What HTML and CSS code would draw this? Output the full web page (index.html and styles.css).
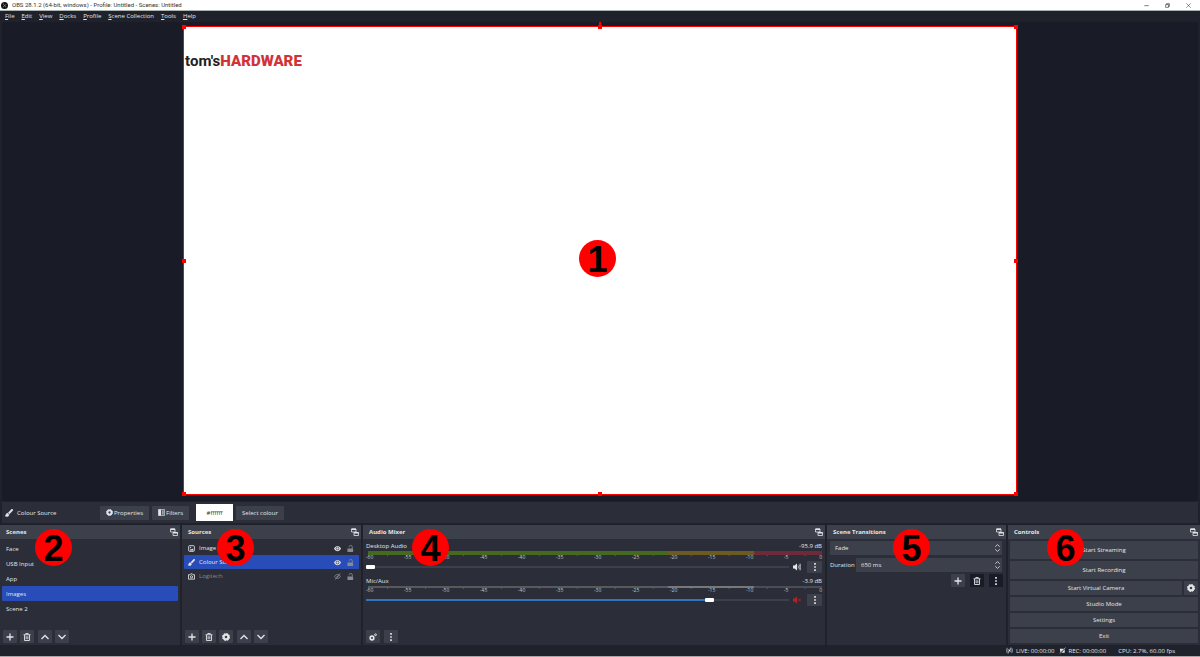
FILE: index.html
```
<!DOCTYPE html>
<html lang="en">
  <head>
    <meta charset="utf-8">
    <title>OBS 28.1.2 (64-bit, windows) - Profile: Untitled - Scenes: Untitled</title>
    <link rel="stylesheet" href="styles.css">
  </head>
  <body>
    <svg class="symbols" aria-hidden="true">
      <symbol id="plus" viewBox="0 0 16 16"><path d="M8 1v14M1 8h14" fill="none" stroke="currentColor" stroke-width="2.6"/></symbol>
      <symbol id="trash" viewBox="0 0 16 16"><path d="M1 3.5h14M5.5 3V1h5v2M3 4v11h10V4M6.3 6.5v6M9.7 6.5v6" fill="none" stroke="currentColor" stroke-width="1.8"/></symbol>
      <symbol id="up" viewBox="0 0 16 16"><path d="M1 12l7-7 7 7" fill="none" stroke="currentColor" stroke-width="2.6"/></symbol>
      <symbol id="down" viewBox="0 0 16 16"><path d="M1 4l7 7 7-7" fill="none" stroke="currentColor" stroke-width="2.6"/></symbol>
      <symbol id="gear" viewBox="0 0 16 16"><circle cx="8" cy="8" r="4.8" fill="none" stroke="currentColor" stroke-width="4.4"/><circle cx="8" cy="8" r="6.8" fill="none" stroke="currentColor" stroke-width="2.2" stroke-dasharray="3 2.34"/></symbol>
      <symbol id="gears" viewBox="0 0 16 16"><circle cx="6" cy="10" r="3.7" fill="none" stroke="currentColor" stroke-width="3.2"/><circle cx="13" cy="3.5" r="1.8" fill="none" stroke="currentColor" stroke-width="2"/></symbol>
      <symbol id="dots" viewBox="0 0 16 16"><path d="M6.3 0h3.4v3.4H6.3zM6.3 6.3h3.4v3.4H6.3zM6.3 12.6h3.4V16H6.3z" fill="currentColor"/></symbol>
      <symbol id="brush" viewBox="0 0 16 16"><path d="M15.5.5c-.8-.8-2-.4-3 .6L6.600 7.600l2.200 2.200 6.200-6.300c1-1 1.200-2.300.5-3zM5.500 8.600C3 8.300 2.200 10 2 11.700 1.800 12.900 1 13.500.2 13.600 2 15.800 7.800 16 8 11.300z" fill="currentColor" stroke="currentColor"/></symbol>
      <symbol id="image" viewBox="0 0 16 16"><rect x="1.500" y="1.500" width="13" height="13" rx="2" fill="none" stroke="currentColor" stroke-width="2"/><path d="M3.500 12.500l3-4 2 2 2-2.500 2.500 4.500z" fill="currentColor"/><circle cx="6" cy="5.500" r="1.300" fill="currentColor"/></symbol>
      <symbol id="camera" viewBox="0 0 16 16"><path d="M1 4h3.500L6 2h4l1.500 2H15v10H1z" fill="none" stroke="currentColor" stroke-width="2"/><circle cx="8" cy="8.800" r="2.600" fill="none" stroke="currentColor" stroke-width="2"/></symbol>
      <symbol id="eye" viewBox="0 0 16 16"><path d="M0 8c4-8 12-8 16 0-4 8-12 8-16 0z" fill="currentColor"/><circle cx="8" cy="8" r="3.200" fill="none" stroke="#2b2e38" stroke-width="1.600"/></symbol>
      <symbol id="eye-off" viewBox="0 0 16 16"><path d="M1 8c4-6 10-6 14 0-4 6-10 6-14 0zM14 1L3 15" fill="none" stroke="currentColor" stroke-width="2"/><circle cx="8" cy="8" r="2" fill="currentColor"/></symbol>
      <symbol id="lock" viewBox="0 0 16 16"><path d="M1 8h13v8H1z" fill="currentColor"/><path d="M5 5V4c0-4 7-4 7 0v4" fill="none" stroke="currentColor" stroke-width="2"/></symbol>
      <symbol id="float" viewBox="0 0 16 16"><path d="M1 2h9v6H1zM6 9h9v6H6z" fill="none" stroke="currentColor" stroke-width="1.600"/><path d="M1 1h9v3H1zM6 8h9v3H6z" fill="currentColor"/></symbol>
      <symbol id="filters" viewBox="0 0 16 16"><path d="M1 1h14v14H1z" fill="none" stroke="currentColor" stroke-width="1.500"/><path d="M1 1h6v14H1zM9 3h1.500v10H9zM12 3h1v10h-1z" fill="currentColor"/></symbol>
      <symbol id="speaker" viewBox="0 0 16 16"><path d="M0 5h3l5-4v14l-5-4H0z" fill="currentColor"/><path d="M10 5q2 3 0 6M12 3q4 5 0 10M14 1q4 7 0 14" fill="none" stroke="currentColor" stroke-width="1.300"/></symbol>
      <symbol id="muted" viewBox="0 0 16 16"><path d="M0 5h3l5-4v14l-5-4H0z" fill="currentColor"/><path d="M10.500 5.500l5 5M15.500 5.500l-5 5" fill="none" stroke="currentColor" stroke-width="2"/></symbol>
      <symbol id="live" viewBox="0 0 16 16"><path d="M3 2q-4 6 0 12M5.500 4.500q-2 3.500 0 7M13 2q4 6 0 12M10.500 4.500q2 3.500 0 7M11 1L5 15" fill="none" stroke="currentColor" stroke-width="1.400"/><circle cx="8" cy="8" r="1.600" fill="currentColor"/></symbol>
      <symbol id="rec" viewBox="0 0 16 16"><path d="M2 4h9L3 12zM13 5v8H6z" fill="currentColor"/><path d="M15 1L2 15" stroke="currentColor" stroke-width="1.400"/></symbol>
      <symbol id="obs" viewBox="0 0 16 16"><circle cx="8" cy="8" r="8" fill="#111"/><path d="M5 3q0 4 3 5 3-1 4-3M8 8q-1 4-4 3M8 8q3 1 3 4" fill="none" stroke="#aaa" stroke-width="1.300"/></symbol>
      <symbol id="minimize" viewBox="0 0 16 16"><path d="M1 8.500h14" stroke="currentColor" stroke-width="2"/></symbol>
      <symbol id="restore" viewBox="0 0 16 16"><path d="M2 5h9v9H2zM5 5V2h9v9h-3" fill="none" stroke="currentColor" stroke-width="2"/></symbol>
      <symbol id="close" viewBox="0 0 16 16"><path d="M1 1l14 14M15 1L1 15" stroke="currentColor" stroke-width="1.700"/></symbol>
    </svg>

    <header class="titlebar">
      <svg class="icon"><use href="#obs"/></svg>
      <span class="title">OBS 28.1.2 (64-bit, windows) - Profile: Untitled - Scenes: Untitled</span>
      <button aria-label="Minimize"><svg class="icon"><use href="#minimize"/></svg></button>
      <button aria-label="Restore"><svg class="icon"><use href="#restore"/></svg></button>
      <button aria-label="Close"><svg class="icon"><use href="#close"/></svg></button>
    </header>

    <nav class="menubar">
      <a href="#"><u>F</u>ile</a>
      <a href="#"><u>E</u>dit</a>
      <a href="#"><u>V</u>iew</a>
      <a href="#"><u>D</u>ocks</a>
      <a href="#"><u>P</u>rofile</a>
      <a href="#"><u>S</u>cene Collection</a>
      <a href="#"><u>T</u>ools</a>
      <a href="#"><u>H</u>elp</a>
    </nav>

    <main class="preview">
      <div class="canvas">
        <div class="logo"><span>tom's</span><b>HARDWARE</b></div>
        <i class="handle top left"></i>
        <i class="handle top middle"></i>
        <i class="handle rotate"></i>
        <i class="handle top right"></i>
        <i class="handle center left"></i>
        <i class="handle center right"></i>
        <i class="handle bottom left"></i>
        <i class="handle bottom middle"></i>
        <i class="handle bottom right"></i>
        <span class="marker">1</span>
      </div>
    </main>

    <section class="context">
      <svg class="icon"><use href="#brush"/></svg>
      <span class="source-name">Colour Source</span>
      <button><svg class="icon"><use href="#gear"/></svg>Properties</button>
      <button><svg class="icon"><use href="#filters"/></svg>Filters</button>
      <input class="swatch" type="text" value="#ffffff" aria-label="Colour" readonly>
      <button>Select colour</button>
    </section>

    <div class="docks">
      <section class="dock">
        <h2>Scenes <svg class="icon"><use href="#float"/></svg></h2>
        <ul class="scenes">
          <li>Face</li>
          <li>USB Input</li>
          <li>App</li>
          <li class="selected">Images</li>
          <li>Scene 2</li>
        </ul>
        <div class="tools">
          <button aria-label="Add scene"><svg class="icon"><use href="#plus"/></svg></button>
          <button aria-label="Remove scene"><svg class="icon"><use href="#trash"/></svg></button>
          <button class="apart" aria-label="Move scene up"><svg class="icon"><use href="#up"/></svg></button>
          <button aria-label="Move scene down"><svg class="icon"><use href="#down"/></svg></button>
        </div>
        <span class="marker">2</span>
      </section>

      <section class="dock">
        <h2>Sources <svg class="icon"><use href="#float"/></svg></h2>
        <ul class="sources">
          <li><svg class="icon"><use href="#image"/></svg><span>Image</span><svg class="icon"><use href="#eye"/></svg><svg class="icon lock"><use href="#lock"/></svg></li>
          <li class="selected"><svg class="icon"><use href="#brush"/></svg><span>Colour Source</span><svg class="icon"><use href="#eye"/></svg><svg class="icon lock"><use href="#lock"/></svg></li>
          <li class="hidden"><svg class="icon"><use href="#camera"/></svg><span>Logitech</span><svg class="icon off"><use href="#eye-off"/></svg><svg class="icon lock"><use href="#lock"/></svg></li>
        </ul>
        <div class="tools">
          <button aria-label="Add source"><svg class="icon"><use href="#plus"/></svg></button>
          <button aria-label="Remove source"><svg class="icon"><use href="#trash"/></svg></button>
          <button aria-label="Source properties"><svg class="icon"><use href="#gear"/></svg></button>
          <button class="apart" aria-label="Move source up"><svg class="icon"><use href="#up"/></svg></button>
          <button aria-label="Move source down"><svg class="icon"><use href="#down"/></svg></button>
        </div>
        <span class="marker">3</span>
      </section>

      <section class="dock mixer">
        <h2>Audio Mixer <svg class="icon"><use href="#float"/></svg></h2>
        <div class="channel">
          <div class="row"><label for="desktop">Desktop Audio</label><output>-95.9 dB</output></div>
          <div class="meter"></div>
          <div class="scale"><span>-60</span><span>-55</span><span>-50</span><span>-45</span><span>-40</span><span>-35</span><span>-30</span><span>-25</span><span>-20</span><span>-15</span><span>-10</span><span>-5</span><span>0</span></div>
          <div class="row volume">
            <input id="desktop" type="range" min="0" max="100" value="0">
            <button class="mute" aria-label="Mute Desktop Audio"><svg class="icon"><use href="#speaker"/></svg></button>
            <button aria-label="Desktop Audio options"><svg class="icon"><use href="#dots"/></svg></button>
          </div>
        </div>
        <div class="channel quiet">
          <div class="row"><label for="mic">Mic/Aux</label><output>-3.9 dB</output></div>
          <div class="meter"></div>
          <div class="scale"><span>-60</span><span>-55</span><span>-50</span><span>-45</span><span>-40</span><span>-35</span><span>-30</span><span>-25</span><span>-20</span><span>-15</span><span>-10</span><span>-5</span><span>0</span></div>
          <div class="row volume">
            <input id="mic" class="filled" type="range" min="0" max="100" value="82">
            <button class="mute muted" aria-label="Unmute Mic/Aux"><svg class="icon"><use href="#muted"/></svg></button>
            <button aria-label="Mic/Aux options"><svg class="icon"><use href="#dots"/></svg></button>
          </div>
        </div>
        <div class="tools">
          <button aria-label="Advanced audio properties"><svg class="icon"><use href="#gears"/></svg></button>
          <button class="apart" aria-label="Mixer menu"><svg class="icon"><use href="#dots"/></svg></button>
        </div>
        <span class="marker">4</span>
      </section>

      <section class="dock transitions">
        <h2>Scene Transitions <svg class="icon"><use href="#float"/></svg></h2>
        <div class="field">
          <select aria-label="Transition"><option>Fade</option></select>
          <span class="arrows"><svg class="icon"><use href="#up"/></svg><svg class="icon"><use href="#down"/></svg></span>
        </div>
        <div class="field duration">
          <label for="duration">Duration</label>
          <input id="duration" type="text" value="650 ms">
          <span class="arrows"><svg class="icon"><use href="#up"/></svg><svg class="icon"><use href="#down"/></svg></span>
        </div>
        <div class="tools">
          <button aria-label="Add transition"><svg class="icon"><use href="#plus"/></svg></button>
          <button class="dark" aria-label="Remove transition"><svg class="icon"><use href="#trash"/></svg></button>
          <button class="dark" aria-label="Transition options"><svg class="icon"><use href="#dots"/></svg></button>
        </div>
        <span class="marker">5</span>
      </section>

      <section class="dock controls">
        <h2>Controls <svg class="icon"><use href="#float"/></svg></h2>
        <div class="buttons">
          <button class="tall">Start Streaming</button>
          <button class="tall">Start Recording</button>
          <div class="camera">
            <button>Start Virtual Camera</button>
            <button aria-label="Virtual camera settings"><svg class="icon"><use href="#gear"/></svg></button>
          </div>
          <button>Studio Mode</button>
          <button>Settings</button>
          <button>Exit</button>
        </div>
        <span class="marker">6</span>
      </section>
    </div>

    <footer class="status">
      <span><svg class="icon"><use href="#live"/></svg>LIVE: 00:00:00</span>
      <span><svg class="icon"><use href="#rec"/></svg>REC: 00:00:00</span>
      <span class="cpu">CPU: 2.7%, 60.00 fps</span>
    </footer>
  </body>
</html>
```
FILE: styles.css
```
* {
  box-sizing: border-box;
}
body {
  display: flex;
  flex-direction: column;
  height: 100vh;
  margin: 0;
  overflow: hidden;
  border-bottom: 1px solid #a5a6aa;
  background-color: #1f222b;
  color: #e4e5e8;
  font: 6px/8px "Open Sans", "Noto Sans", sans-serif;
}
button, input, select {
  margin: 0;
  padding: 0;
  border: 0;
  border-radius: 1px;
  background-color: #3c404b;
  color: inherit;
  font: inherit;
}
button {
  display: flex;
  align-items: center;
  justify-content: center;
}
ul {
  margin: 0;
  padding: 0;
  list-style: none;
}
.symbols {
  display: none;
}
.icon {
  display: block;
  flex: none;
  width: 8px;
  height: 8px;
}

.titlebar {
  display: flex;
  align-items: center;
  gap: 4px;
  height: 11px;
  padding: 0 3px 0 1px;
  border-bottom: 1px solid #a9b3b0;
  background-color: #fff;
  color: #333;
}
.titlebar .title {
  flex: 1;
  font-family: Roboto, sans-serif;
}
.titlebar > .icon {
  width: 7px;
  height: 7px;
}
.titlebar button {
  width: 17px;
  background: none;
}
.titlebar button .icon {
  width: 5px;
  height: 5px;
}

.menubar {
  display: flex;
  gap: 7px;
  height: 10px;
  margin-bottom: 1px;
  padding-left: 5px;
  align-items: center;
}
.menubar a {
  color: inherit;
  text-decoration: none;
}

.preview {
  display: flex;
  flex: 1;
  justify-content: center;
  min-height: 0;
  margin: 0 2px;
  padding: 4px 0 6px;
  background-color: #191b26;
}
.canvas {
  position: relative;
  height: 100%;
  aspect-ratio: 16 / 9;
  border: 1px solid #f00;
  background-color: #fff;
}
.logo {
  display: flex;
  padding: 24px 1px;
  color: #222;
  font: bold 15px/20px Roboto, sans-serif;
}
.logo b {
  color: #d13438;
}
.handle {
  position: absolute;
  width: 4px;
  height: 4px;
  background-color: #f00;
}
.top { top: -2px; }
.bottom { bottom: -2px; }
.left { left: -2px; }
.right { right: -2px; }
.center { top: calc(50% - 2px); }
.middle { left: calc(50% - 2px); }
.rotate {
  top: -5px;
  left: calc(50% - 1px);
  width: 2px;
}

.marker {
  position: absolute;
  width: 37px;
  height: 37px;
  border-radius: 50%;
  background-color: #f00;
  color: #000;
  font: bold 36px/39px "Liberation Sans", Arial, sans-serif;
  text-align: center;
}
.canvas .marker {
  top: calc(50% - 21px);
  left: calc(50% - 21px);
}
.dock .marker {
  top: 4px;
  left: 35px;
}
.mixer .marker {
  left: 49px;
}
.transitions .marker {
  left: 66px;
}
.controls .marker {
  left: 39px;
}

.context {
  display: flex;
  align-items: center;
  height: 21px;
  margin: 1px 2px 2px;
  padding: 0 3px;
  background-color: #2b2e38;
}
.context .source-name {
  width: 83px;
  margin-left: 4px;
}
.context button {
  gap: 1px;
  height: 14px;
  margin-right: 3px;
  padding: 0 6px;
}
.context button .icon {
  width: 7px;
  height: 7px;
}
.context .swatch {
  width: 37px;
  height: 17px;
  margin: 0 3px 0 4px;
  border-radius: 0;
  background-color: #fff;
  color: #333;
  text-align: center;
}

.docks {
  display: grid;
  grid-template-columns: 180fr 179fr 462fr 179fr 192fr;
  gap: 2px;
  height: 120px;
}
.dock {
  position: relative;
  display: flex;
  flex-direction: column;
  min-width: 0;
  background-color: #2b2e38;
}
.dock h2 {
  display: flex;
  align-items: center;
  justify-content: space-between;
  height: 14px;
  margin: 0 0 2px;
  padding: 0 2px 0 6px;
  background-color: #3c404b;
  font-size: 6px;
}
.dock li {
  display: flex;
  align-items: center;
  height: 15px;
  margin: 0 2px;
  padding: 0 5px 0 4px;
  border-radius: 1px;
}
.dock .sources li {
  gap: 4px;
  height: 14px;
}
.sources li span {
  flex: 1;
}
.sources .icon {
  width: 7px;
  height: 7px;
}
.sources .lock {
  margin-left: 2px;
}
.sources .lock, .sources .off {
  color: #888a90;
}
.dock li.selected {
  background-color: #284cb8;
}
.dock .hidden span {
  color: #85878e;
}
.tools {
  display: flex;
  gap: 3px;
  margin-top: auto;
  padding: 0 3px 2px;
}
.tools button {
  width: 14px;
  height: 13px;
}
.tools .apart {
  margin-left: 1px;
}

.channel {
  height: 35px;
  padding: 0 3px;
}
.row {
  display: flex;
  align-items: center;
  justify-content: space-between;
  line-height: 10px;
}
.channel .meter {
  height: 4px;
  margin-left: 2px;
  background: linear-gradient(to right, #44691f 66%, #6b5a22 66% 85%, #6d2a38 85%);
}
.quiet .meter {
  height: 2px;
  background: linear-gradient(to right, #57595d 66%, #77787c 66% 85%, #4b4d55 85%);
}
.scale {
  display: flex;
  justify-content: space-between;
  background: linear-gradient(to right, #5a5d66 1px, transparent 1px) 2px 0 / calc(100% / 24) 1px repeat-x;
  color: #c0c2c6;
  font-size: 5px;
  line-height: 5px;
}
.volume {
  margin-top: 1px;
}
.volume button {
  width: 15px;
  height: 12px;
}
.volume .mute {
  margin: 0 3px 0 auto;
  background: none;
}
.volume .muted {
  color: #b52025;
}
input[type="range"] {
  flex: 1;
  height: 8px;
  background: none;
  appearance: none;
}
input[type="range"]::-webkit-slider-runnable-track {
  height: 2px;
  background-color: #3c404b;
}
input.filled::-webkit-slider-runnable-track {
  background: linear-gradient(to right, #2f76bd 82%, #3c404b 82%);
}
input[type="range"]::-webkit-slider-thumb {
  width: 9px;
  height: 4px;
  margin-top: -1px;
  border-radius: 1px;
  background-color: #fff;
  appearance: none;
}

.field {
  display: flex;
  position: relative;
  align-items: center;
  margin: 0 4px 3px 3px;
}
.field select, .field input {
  flex: 1;
  min-width: 0;
  height: 14px;
  padding-left: 5px;
  appearance: none;
}
.duration {
  margin-bottom: 2px;
}
.duration label {
  width: 26px;
}
.arrows {
  position: absolute;
  right: 2px;
}
.arrows .icon {
  width: 5px;
  height: 5px;
}
.transitions .tools {
  gap: 5px;
  justify-content: flex-end;
  margin-top: 0;
}
.tools .dark {
  background-color: #191b26;
}

.buttons {
  display: flex;
  flex-direction: column;
  gap: 2px;
  padding: 0 2px;
}
.buttons button {
  height: 14px;
}
.buttons .tall {
  height: 18px;
}
.camera {
  display: flex;
  gap: 2px;
}
.camera button {
  width: 14px;
}
.camera button:first-child {
  flex: 1;
}

.status {
  display: flex;
  align-items: center;
  justify-content: flex-end;
  gap: 4px;
  height: 11px;
  padding-right: 25px;
}
.status span {
  display: flex;
  align-items: center;
  gap: 3px;
}
.status .icon {
  width: 7px;
  height: 7px;
}
.status .cpu {
  margin-left: 8px;
}
```
